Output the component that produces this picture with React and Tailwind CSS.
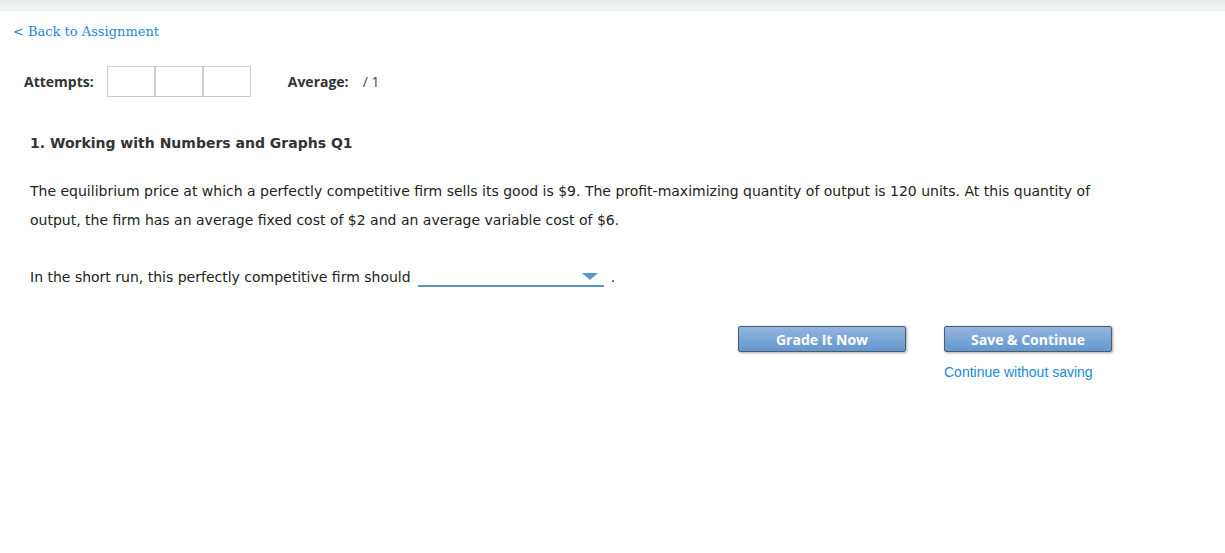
import React from 'react';

const verdana = { fontFamily: '"DejaVu Sans", Verdana, sans-serif' };

const App = () => {
  return (
    <div className="min-h-[553px] w-[1225px] bg-white">
      {/* top strip */}
      <div className="h-[11px] bg-gradient-to-b from-[#e6ecee] to-[#f4f6f5] border-b border-[#eef1f0]" />

      <div className="pl-[13px] pt-[11px] text-[13px] leading-[18px]">
        <a href="#" className="text-[#1b8ad3] font-['DejaVu_Serif',serif]">
          &lt; Back to Assignment
        </a>
      </div>

      {/* attempts row */}
      <div className="flex items-center pl-[24px] mt-[25px] font-['Open_Sans',sans-serif] text-[14px]">
        <span className="font-bold text-[#333]">Attempts:</span>
        <div className="flex ml-[13px]">
          <div className="w-[48px] h-[31px] border border-[#cccccc]" />
          <div className="w-[48px] h-[31px] border border-[#cccccc]" />
          <div className="w-[48px] h-[31px] border border-[#cccccc]" />
        </div>
        <span className="ml-[37px] font-bold text-[#333]">Average:</span>
        <span className="ml-[14px] text-[#444]">/ 1</span>
      </div>

      {/* question */}
      <div className="pl-[30px] w-[1140px]" style={verdana}>
        <h2 className="mt-[37px] text-[14px] font-bold text-[#333] leading-[18px]">
          1. Working with Numbers and Graphs Q1
        </h2>
        <p className="mt-[25px] text-[14px] leading-[29px] text-[#222]">
          The equilibrium price at which a perfectly competitive firm sells its good is $9. The
          profit-maximizing quantity of output is 120 units. At this quantity of output, the firm
          has an average fixed cost of $2 and an average variable cost of $6.
        </p>
        <div className="mt-[32px] flex items-end text-[14px] leading-[20px] text-[#222]">
          <span>In the short run, this perfectly competitive firm should</span>
          <div className="ml-[7px] w-[186px] h-[18px] border-b-2 border-[#5d95c9] flex justify-end items-center pr-[6px]">
            <svg width="16" height="8" viewBox="0 0 16 8">
              <polygon points="0,0 16,0 8,7" fill="#5d95c9" />
            </svg>
          </div>
          <span className="ml-[7px]">.</span>
        </div>
      </div>

      {/* buttons */}
      <div className="flex justify-end pr-[113px] mt-[39px] gap-[38px] font-['Open_Sans',sans-serif]">
        <button className="w-[168px] h-[26px] rounded-[2px] border border-[#4d5b6a] bg-gradient-to-b from-[#93b6de] to-[#6397cf] text-white text-[14px] font-bold shadow-[1px_1px_3px_rgba(0,0,0,0.35)]">
          Grade It Now
        </button>
        <div className="flex flex-col">
          <button className="w-[168px] h-[26px] rounded-[2px] border border-[#4d5b6a] bg-gradient-to-b from-[#93b6de] to-[#6397cf] text-white text-[14px] font-bold shadow-[1px_1px_3px_rgba(0,0,0,0.35)]">
            Save &amp; Continue
          </button>
          <a
            href="#"
            className="mt-[10px] text-[14px] text-[#1b8ad3] font-['Liberation_Sans',Arial,sans-serif]"
          >
            Continue without saving
          </a>
        </div>
      </div>
    </div>
  );
};

export default App;
